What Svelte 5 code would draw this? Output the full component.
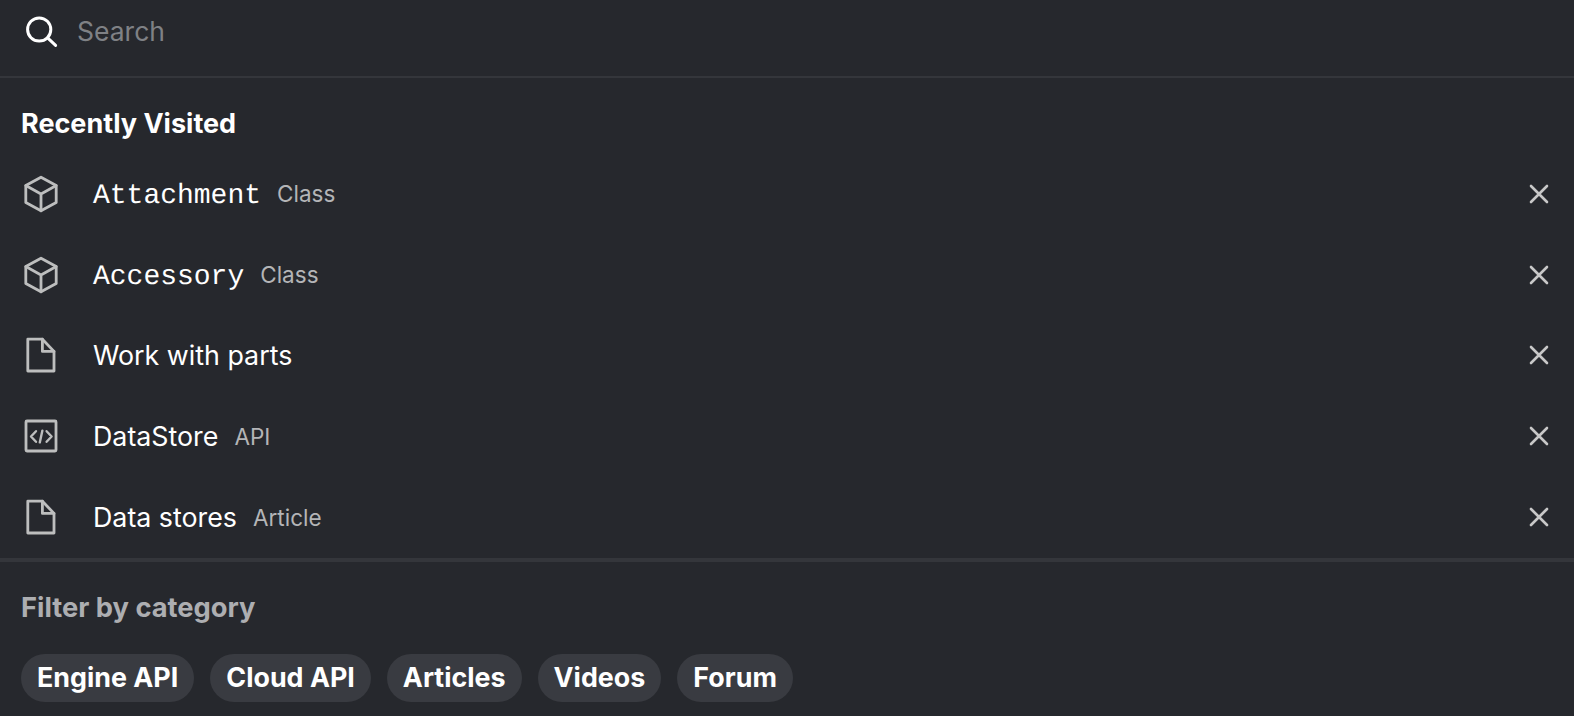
<script>
  const recent = [
    { name: 'Attachment', tag: 'Class', icon: 'cube', mono: true },
    { name: 'Accessory', tag: 'Class', icon: 'cube', mono: true },
    { name: 'Work with parts', tag: '', icon: 'file', mono: false },
    { name: 'DataStore', tag: 'API', icon: 'code', mono: false },
    { name: 'Data stores', tag: 'Article', icon: 'file', mono: false }
  ];
  const categories = ['Engine API', 'Cloud API', 'Articles', 'Videos', 'Forum'];
</script>

<div class="panel">
  <div class="search">
    <svg class="icon search-icon" viewBox="0 0 40 40" fill="none" stroke="#fff" stroke-width="3" stroke-linecap="round">
      <circle cx="18.2" cy="17.5" r="11.6" />
      <path d="M26.6 25.8L34.6 33.4" />
    </svg>
    <span class="placeholder">Search</span>
  </div>

  <section class="recent">
    <h3>Recently Visited</h3>
    <ul>
      {#each recent as item}
        <li>
          <svg class="icon" viewBox="0 0 40 40" fill="none" stroke="#bdbebe" stroke-width="2.8" stroke-linejoin="round" stroke-linecap="round">
            {#if item.icon === 'cube'}
              <path d="M20 3.2L35.2 11.6V28.4L20 36.8L4.8 28.4V11.6Z" />
              <path d="M4.8 11.6L20 20L35.2 11.6M20 20V36.8" />
            {:else if item.icon === 'file'}
              <path d="M6.8 4.2H21.4L33 16.4V36H6.8Z" />
              <path d="M21.4 4.2V16.4H33" />
            {:else}
              <rect x="5" y="5" width="30" height="30" rx="1" />
              <path d="M15 15.2L10 20.5L15 25.8M25.6 15.2L30.6 20.5L25.6 25.8M21.4 14.6L18.8 26.4" stroke-width="2.4" />
            {/if}
          </svg>
          <span class="name" class:mono={item.mono}>{item.name}</span>
          {#if item.tag}<span class="tag">{item.tag}</span>{/if}
          <svg class="close" viewBox="0 0 20 20" fill="none" stroke="#c8c8c8" stroke-width="2.6" stroke-linecap="round">
            <path d="M2 2L18 18M18 2L2 18" />
          </svg>
        </li>
      {/each}
    </ul>
  </section>

  <section class="filter">
    <h4>Filter by category</h4>
    <div class="chips">
      {#each categories as category}
        <button type="button">{category}</button>
      {/each}
    </div>
  </section>
</div>

<style>
  :global(body) {
    background: #26282d;
  }

  .panel {
    height: 716px;
    overflow: hidden;
    background: #26282d;
    color: #fff;
    font-family: Inter, "Noto Sans", sans-serif;
  }

  .search {
    display: flex;
    align-items: center;
    gap: 16px;
    height: 64px;
    padding: 0 21px 12px;
    border-bottom: 2px solid #34363b;
    box-sizing: content-box;
  }

  .placeholder {
    font-size: 26.5px;
    line-height: 36px;
    margin-top: -2px;
    color: #7f8185;
  }

  .icon {
    flex: none;
    width: 40px;
    height: 40px;
  }

  .recent h3 {
    margin: 0;
    padding: 27px 21px 0;
    font-size: 27px;
    line-height: 38px;
    font-weight: 700;
    height: 48.5px;
    box-sizing: content-box;
  }

  ul {
    margin: 0;
    padding: 0 0 1px;
    list-style: none;
  }

  li {
    display: flex;
    align-items: center;
    height: 80.8px;
    padding: 0 25px 0 21px;
  }

  .name {
    margin-left: 32px;
    font-size: 26.8px;
  }

  .name.mono {
    font-family: "Liberation Mono", monospace;
    font-size: 28px;
    padding-top: 5px;
    text-rendering: geometricPrecision;
  }

  .tag {
    margin-left: 16px;
    font-size: 22.5px;
    color: #b4b5b7;
  }

  .close {
    margin-left: auto;
    width: 20px;
    height: 20px;
  }

  .filter {
    border-top: 4px solid #34363b;
    padding: 28px 21px 0;
  }

  .filter h4 {
    margin: 0;
    font-size: 27.3px;
    line-height: 36px;
    font-weight: 700;
    color: #adaeb1;
  }

  .chips {
    display: flex;
    gap: 16px;
    margin-top: 28px;
  }

  button {
    height: 48px;
    padding: 0 16px 2px;
    border: 0;
    border-radius: 24px;
    background: #393b41;
    color: #fff;
    font: 700 26.85px Inter, "Noto Sans", sans-serif;
  }
</style>
